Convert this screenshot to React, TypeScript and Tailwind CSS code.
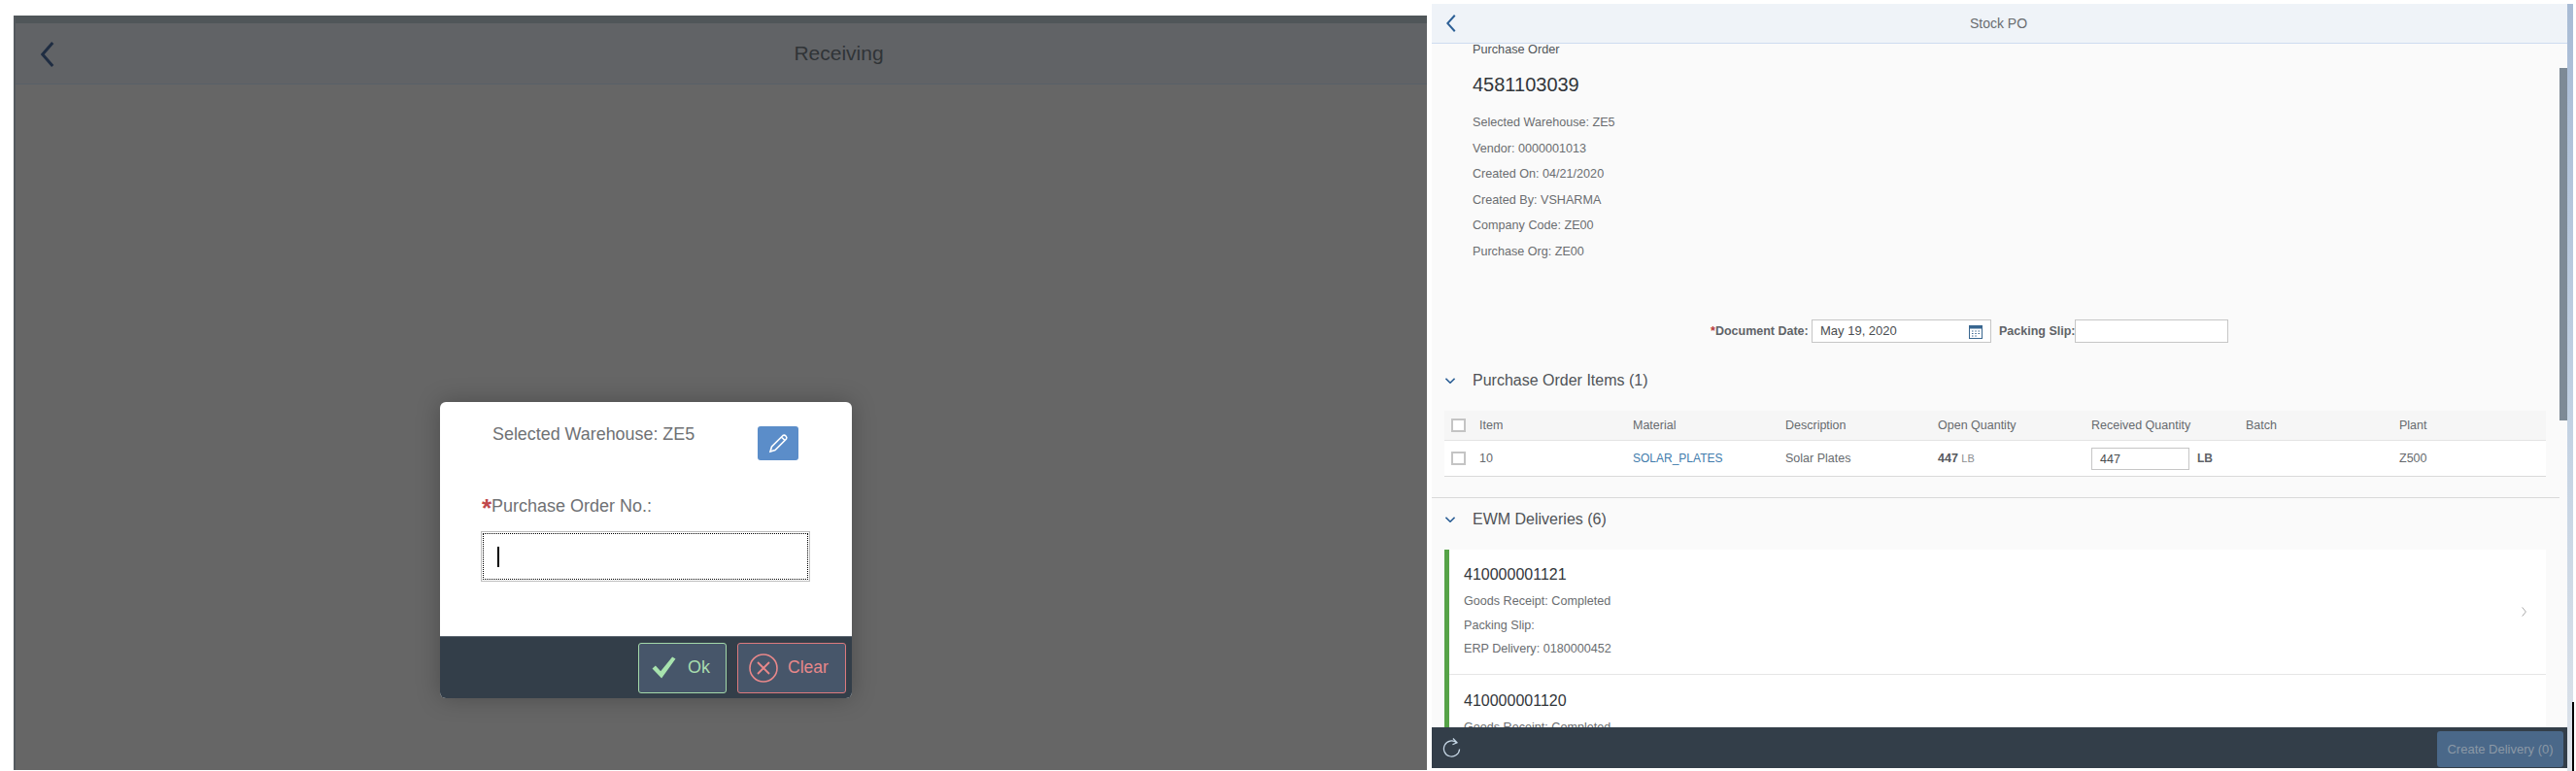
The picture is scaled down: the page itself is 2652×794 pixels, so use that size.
import React from "react";

const font = { fontFamily: '"Liberation Sans", Arial, sans-serif' };

function Chevron({ dir, className, sw = 2 }: { dir: "left" | "right" | "down"; className: string; sw?: number }) {
  const d = dir === "left" ? "M21 1 L3 12 L21 23" : dir === "right" ? "M3 1 L21 12 L3 23" : "M1 3 L12 21 L23 3";
  return (
    <svg viewBox="0 0 24 24" preserveAspectRatio="none" className={className} fill="none" stroke="currentColor">
      <path d={d} vectorEffect="non-scaling-stroke" strokeWidth={sw} />
    </svg>
  );
}

function Checkbox() {
  return <div className="w-[15px] h-[14px] border-2 border-[#c4c4c4] bg-white shrink-0" />;
}

const infoLines = [
  "Selected Warehouse: ZE5",
  "Vendor: 0000001013",
  "Created On: 04/21/2020",
  "Created By: VSHARMA",
  "Company Code: ZE00",
  "Purchase Org: ZE00",
];

function Delivery({ no, last }: { no: string; last?: boolean }) {
  return (
    <div className="relative h-[130px] bg-white border-l-[5px] border-[#56a347]">
      <div className={`h-[129px] pl-[15px] pt-[16px] ${last ? "" : "border-b border-[#e5e5e5]"}`}>
        <div className="h-[20px] leading-[20px] text-[16px] text-[#32363a]">{no}</div>
        <div className="mt-[5px] text-[12.6px] text-[#6a6d70] leading-[24.5px]">
          <div>Goods Receipt: Completed</div>
          <div>Packing Slip:</div>
          <div>ERP Delivery: 0180000452</div>
        </div>
      </div>
      <Chevron dir="right" sw={1} className="absolute left-[1104px] top-[59px] w-[5px] h-[10px] text-[#a9a9a9]" />
    </div>
  );
}

export default function App() {
  return (
    <div className="w-[2652px] h-[794px] bg-white flex overflow-hidden text-[13px]" style={font}>
      {/* Left: Receiving screen under a modal */}
      <div className="relative ml-[14px] mt-[16px] w-[1455px] h-[777px] bg-[#666666] border-l-2 border-[#54595e] flex flex-col">
        <div className="h-[8px] bg-[#505659]" />
        <div className="relative h-[63px] bg-[#616366] border-b border-[#586067] flex items-center justify-center">
          <Chevron dir="left" sw={3} className="absolute left-[26px] top-[19px] w-[14px] h-[26px] text-[#1f2d42]" />
          <span className="text-[21px] text-[#303437] ml-[242px]">Receiving</span>
        </div>

        <div className="absolute left-[437px] top-[398px] w-[424px] h-[305px] bg-white rounded-[6px] overflow-hidden flex flex-col shadow-[0_0_24px_rgba(0,0,0,0.25)]">
          <div className="relative flex-1">
            <div className="absolute left-[54px] top-[22px] text-[17.9px] leading-[22px] text-[#6f7174]">Selected Warehouse: ZE5</div>
            <div className="absolute left-[327px] top-[25px] w-[42px] h-[35px] rounded-[3px] bg-[#5b8dc9] flex items-center justify-center">
              <svg viewBox="0 0 24 24" className="w-[24px] h-[24px]" fill="none" stroke="#ffffff" strokeWidth="1.6">
                <path d="M4 20 L5.5 15 L17 3.5 Q18.5 2.5 20 4 Q21.500 5.500 20.500 7 L9 18.500 Z M15.500 5 L19 8.500" />
              </svg>
            </div>
            <div className="absolute left-[43px] top-[96px] h-[22px] flex text-[18px] leading-[22px] text-[#6f7174]">
              <span className="w-[10px] text-[26px] leading-[26px] text-[#c0484c] font-bold">*</span>Purchase Order No.:
            </div>
            <div className="absolute left-[42px] top-[133px] w-[339px] h-[52px] border border-[#bdbdbd] p-[1px]">
              <div className="w-full h-full border border-dotted border-black flex items-center pl-[14px]">
                <div className="w-[2px] h-[21px] bg-black" />
              </div>
            </div>
          </div>
          <div className="h-[64px] bg-[#333e49] border-t border-[#5d6771] flex items-center justify-end gap-[11px] pr-[6px]">
            <div className="w-[91px] h-[52px] rounded-[3px] border border-[#a3d8a9] bg-[#47566a] flex items-center pl-[13px] gap-[12px]">
              <svg viewBox="0 0 26 24" className="w-[25px] h-[23px]" fill="#a8e3ae">
                <path d="M0.500 13 L4 10 L9.500 16 L22 0.500 L25.500 2.500 L10.500 23.500 Z" />
              </svg>
              <span className="text-[18px] text-[#a8dcae]">Ok</span>
            </div>
            <div className="w-[112px] h-[52px] rounded-[3px] border border-[#dc7a7d] bg-[#47566a] flex items-center pl-[11px] gap-[10px]">
              <svg viewBox="0 0 30 30" className="w-[30px] h-[30px]" fill="none" stroke="#e8888a" strokeWidth="1.600">
                <circle cx="15" cy="15" r="14" />
                <path d="M9 9 L21 21 M21 9 L9 21" strokeWidth="1.800" />
              </svg>
              <span className="text-[17.5px] text-[#e8888a]">Clear</span>
            </div>
          </div>
        </div>
      </div>

      {/* Right: Stock PO */}
      <div className="relative ml-[5px] mt-[4px] w-[1169px] h-[787px] flex flex-col shrink-0">
        <div className="relative h-[41px] shrink-0 bg-[#eff3f8] border-b border-[#cddcf0] flex items-center justify-center">
          <Chevron dir="left" sw={2} className="absolute left-[15px] top-[11px] w-[10px] h-[18px] text-[#2c5f96]" />
          <span className="text-[14px] text-[#6a6d70] ml-[-2px]">Stock PO</span>
        </div>

        <div className="flex-1 min-h-0 bg-[#fafafa] overflow-hidden">
          <div className="pl-[42px]">
            <div className="h-[13px] leading-[13px] text-[12.7px] text-[#515559]">Purchase Order</div>
            <div className="mt-[17px] h-[24px] leading-[24px] text-[20px] text-[#32363a]">4581103039</div>
            <div className="mt-[14px] text-[12.6px] text-[#6a6d70]">
              {infoLines.map((l) => (
                <div key={l} className="h-[26.5px] leading-[26.5px]">{l}</div>
              ))}
            </div>
          </div>

          <div className="mt-[57px] ml-[287px] flex items-center h-[24px]">
            <span className="w-[104px] font-bold text-[12.5px] text-[#5f6367] whitespace-nowrap">
              <span className="text-[#b8393d]">*</span>Document Date:
            </span>
            <div className="w-[185px] h-[24px] bg-white border border-[#c6c6c6] flex items-center justify-between pl-[8px] pr-[8px] text-[13px] text-[#4a4d50]">
              <span>May 19, 2020</span>
              <svg viewBox="0 0 14 15" className="w-[14px] h-[15px]" fill="none">
                <rect x="0.500" y="1.500" width="13" height="13" stroke="#38668f" />
                <rect x="0.500" y="1.500" width="13" height="3" fill="#38668f" />
                <path d="M3 7h1.500M6.250 7h1.500M9.500 7h1.500M3 9.500h1.500M6.250 9.500h1.500M9.500 9.500h1.500M3 12h1.500M6.250 12h1.500" stroke="#38668f" />
              </svg>
            </div>
            <span className="w-[78px] ml-[8px] font-bold text-[12.5px] text-[#5f6367] whitespace-nowrap">Packing Slip:</span>
            <div className="w-[158px] h-[24px] bg-white border border-[#c6c6c6]" />
          </div>

          <div className="mt-[29px] ml-[14px] flex items-center h-[20px] gap-[18px]">
            <Chevron dir="down" sw={1.6} className="w-[10px] h-[6px] text-[#2c5f96]" />
            <span className="text-[16px] text-[#505357]">Purchase Order Items (1)</span>
          </div>

          <div className="mt-[21px] ml-[13px] w-[1134px]">
            <div className="h-[31px] bg-[#f6f6f6] border-b border-[#e4e4e4] flex items-center pl-[7px] text-[12.5px] text-[#666a6e]">
              <Checkbox />
              <div className="w-[158px] ml-[14px]">Item</div>
              <div className="w-[157px]">Material</div>
              <div className="w-[157px]">Description</div>
              <div className="w-[158px]">Open Quantity</div>
              <div className="w-[159px]">Received Quantity</div>
              <div className="w-[158px]">Batch</div>
              <div>Plant</div>
            </div>
            <div className="h-[37px] bg-white border-b border-[#d9d9d9] flex items-center pl-[7px] text-[12.5px] text-[#666a6e]">
              <Checkbox />
              <div className="w-[158px] ml-[14px]">10</div>
              <div className="w-[157px] text-[12px] text-[#427cac]">SOLAR_PLATES</div>
              <div className="w-[157px]">Solar Plates</div>
              <div className="w-[158px]">
                <span className="font-bold text-[#55585c]">447</span> <span className="text-[11px] text-[#8a8d90]">LB</span>
              </div>
              <div className="w-[159px] flex items-center gap-[8px]">
                <div className="w-[101px] h-[23px] border border-[#c6c6c6] pl-[8px] leading-[22px] text-[#4a4d50]">447</div>
                <span className="text-[#5f6367] font-bold text-[12px]">LB</span>
              </div>
              <div className="w-[158px]" />
              <div>Z500</div>
            </div>
          </div>

          <div className="mt-[21px] mr-[8px] h-px bg-[#d9d9d9]" />

          <div className="mt-[12px] ml-[14px] flex items-center h-[20px] gap-[18px]">
            <Chevron dir="down" sw={1.6} className="w-[10px] h-[6px] text-[#2c5f96]" />
            <span className="text-[16px] text-[#505357]">EWM Deliveries (6)</span>
          </div>

          <div className="mt-[21px] ml-[13px] w-[1134px]">
            <Delivery no="410000001121" />
            <Delivery no="410000001120" last />
          </div>
        </div>

        <div className="h-[42px] shrink-0 bg-[#333e49] flex items-center justify-between pl-[11px] pr-[4px]">
          <svg viewBox="0 0 20 22" className="w-[19px] h-[21px]" fill="none" stroke="#c8d9e8" strokeWidth="1.300">
            <path d="M15.500 5 A8.500 8.500 0 1 0 18.500 12" />
            <path d="M11.500 0.500 L15.800 5 L11 7" />
          </svg>
          <div className="w-[130px] h-[37px] mt-[3px] rounded-[3px] bg-[#4a6889] flex items-center justify-center text-[13px] text-[#8b98a6]">Create Delivery (0)</div>
        </div>

        {/* Scrollbar thumb overlays the scroller */}
        <div className="absolute left-[1161px] top-[66px] w-[8px] h-[363px] bg-[#7d8a96]" />
      </div>

      {/* Scrollbar track */}
      <div className="relative mt-[4px] w-[6px] h-[790px] bg-[linear-gradient(#a8bbd5,#c3d2e3_55%,#dde3ea)]">
        <div className="absolute left-[5px] top-[719px] w-[2px] h-[71px] bg-black" />
      </div>
    </div>
  );
}
